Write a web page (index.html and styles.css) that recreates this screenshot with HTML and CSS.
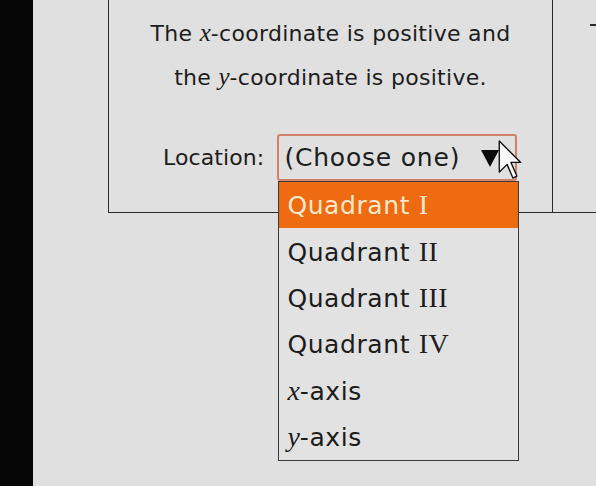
FILE: index.html
```html
<!DOCTYPE html>
<html>
<head>
<meta charset="utf-8">
<link rel="stylesheet" href="styles.css">
</head>
<body>
<div class="strip"></div>
<div class="page">
  <div class="row">
    <div class="cell">
      <p class="q">The <i class="m">x</i>-coordinate is positive and<br>the <i class="m">y</i>-coordinate is positive.</p>
      <div class="loc">
        <span class="lbl">Location:</span>
        <div class="sel">
          <span class="val">(Choose one)</span>
          <svg class="arrow" width="18" height="17" viewBox="0 0 18 17"><polygon points="0,0 18,0 9,17" fill="#0a0a0a"/></svg>
          <svg class="cursor" width="24" height="39" viewBox="0 0 24 40"><path d="M1 1 V33 L9 25 L15 39 L19 37 L13 23 H23 Z" fill="#fafafa" stroke="#111" stroke-width="1.4" stroke-linejoin="round"/></svg>
          <ul class="menu">
            <li class="hi"><span>Quadrant <span class="r">I</span></span></li>
            <li><span>Quadrant <span class="r">II</span></span></li>
            <li><span>Quadrant <span class="r">III</span></span></li>
            <li><span>Quadrant <span class="r">IV</span></span></li>
            <li><span><i class="mi">x</i>-axis</span></li>
            <li><span><i class="mi">y</i>-axis</span></li>
          </ul>
        </div>
      </div>
    </div>
    <div class="cell2"><span class="peek"></span></div>
  </div>
</div>
</body>
</html>
```

FILE: styles.css
```css
html, body {
  margin: 0;
  padding: 0;
}
body {
  display: flex;
  width: 596px;
  height: 486px;
  overflow: hidden;
  background: #e0e0e0;
  font-family: "DejaVu Sans", Verdana, sans-serif;
  color: #1c1c1c;
}
.strip {
  width: 33px;
  flex: none;
  background: #060606;
}
.page {
  flex: 1;
  padding-left: 75px;
}
.row {
  display: grid;
  grid-template-columns: 445px 1fr;
  height: 213px;
  box-sizing: border-box;
  border-bottom: 1.5px solid #2a2a2a;
}
.cell {
  border-left: 1.5px solid #2a2a2a;
  border-right: 1.5px solid #2a2a2a;
}
.q {
  margin: 0;
  padding-top: 11px;
  text-align: center;
  font-size: 22px;
  letter-spacing: 0.3px;
  line-height: 43px;
}
.m {
  font-family: "Liberation Serif", "Times New Roman", serif;
  font-size: 25px;
  letter-spacing: 0;
}
.loc {
  display: flex;
  align-items: center;
  gap: 13px;
  margin-top: 35px;
  padding-left: 54px;
}
.lbl {
  font-size: 22px;
  letter-spacing: 0.1px;
}
.sel {
  position: relative;
  width: 240px;
  height: 47px;
  box-sizing: border-box;
  border: 2px solid #d3806a;
  border-radius: 3px;
  display: flex;
  align-items: center;
  padding-left: 5px;
  padding-right: 16px;
  font-size: 25px;
  letter-spacing: 0.8px;
}
.arrow {
  margin-left: auto;
  margin-top: 2px;
}
.cursor {
  position: absolute;
  left: 219px;
  top: 4px;
}
.menu {
  position: absolute;
  top: calc(100% + 2px);
  left: -1px;
  width: 241px;
  box-sizing: border-box;
  margin: 0;
  padding: 0;
  list-style: none;
  border: 1px solid #3a3a3a;
  background: #e2e2e2;
}
.menu li {
  height: 46.4px;
  display: flex;
  align-items: center;
  padding-left: 8px;
  font-size: 25px;
  letter-spacing: 0.6px;
  color: #1c1c1c;
}
.menu li.hi {
  background: #ee6b12;
  color: #fbe8cc;
}
.r {
  font-family: "Liberation Serif", "Times New Roman", serif;
  font-size: 28px;
  letter-spacing: 0.5px;
}
.mi {
  font-family: "Liberation Serif", "Times New Roman", serif;
  font-size: 28px;
  letter-spacing: 0;
}
.cell2 {
  padding-left: 37px;
  padding-top: 24px;
}
.peek {
  display: block;
  width: 8px;
  height: 2px;
  background: #2a2a2a;
}
```
